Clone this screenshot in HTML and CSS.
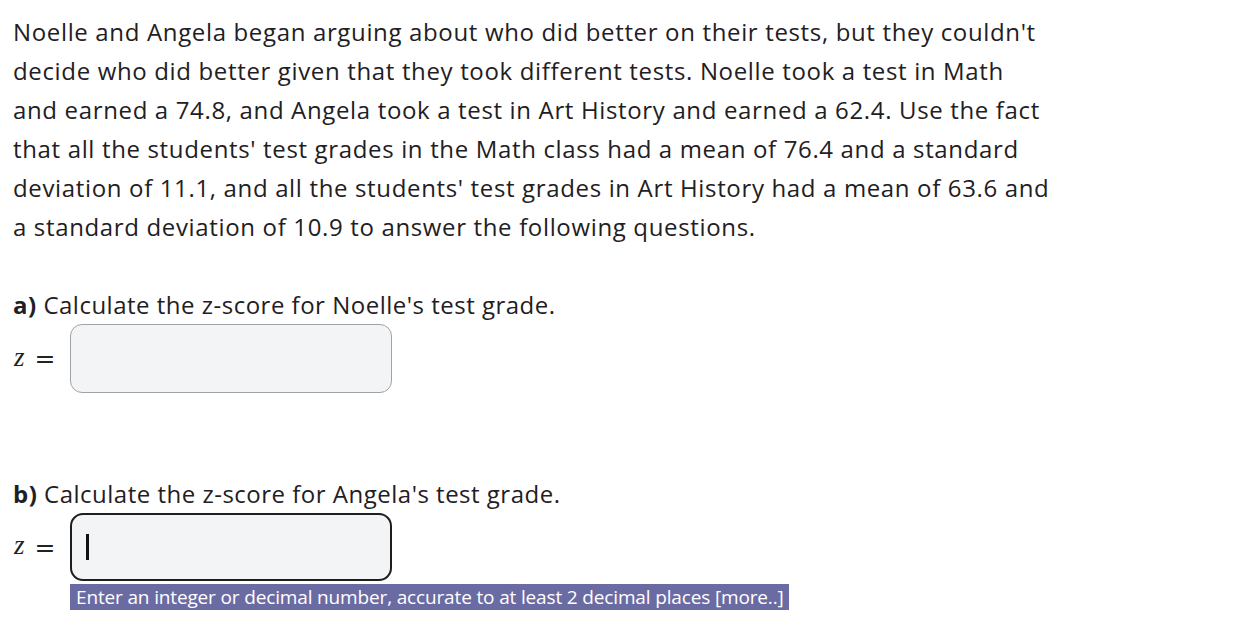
FILE: index.html
```html
<!DOCTYPE html>
<html>
<head>
<meta charset="utf-8">
<link rel="stylesheet" href="styles.css">
</head>
<body>
<div class="page">
  <p class="intro">Noelle and Angela began arguing about who did better on their tests, but they couldn't decide who did better given that they took different tests. Noelle took a test in Math and earned a 74.8, and Angela took a test in Art History and earned a 62.4. Use the fact that all the students' test grades in the Math class had a mean of 76.4 and a standard deviation of 11.1, and all the students' test grades in Art History had a mean of 63.6 and a standard deviation of 10.9 to answer the following questions.</p>

  <div class="part part-a">
    <p class="question"><b>a)</b> Calculate the z-score for Noelle's test grade.</p>
    <div class="answer-row">
      <span class="math"><i class="var">z</i><span class="eq">=</span></span>
      <div class="field"></div>
    </div>
  </div>

  <div class="part part-b">
    <p class="question"><b>b)</b> Calculate the z-score for Angela's test grade.</p>
    <div class="answer-row">
      <span class="math"><i class="var">z</i><span class="eq">=</span></span>
      <div class="field field-focus"><span class="caret"></span></div>
    </div>
    <div class="hint">Enter an integer or decimal number, accurate to at least 2 decimal places [more..]</div>
  </div>
</div>
</body>
</html>
```
FILE: styles.css
```css
html, body {
  margin: 0;
  padding: 0;
  background: #ffffff;
}
.page {
  padding: 12px 0 0 13px;
  width: 1038px;
  font-family: "Open Sans", "Noto Sans", sans-serif;
  font-size: 24px;
  line-height: 39px;
  color: #1f2023;
}
.intro {
  margin: 0;
  letter-spacing: 0.65px;
}
.question {
  margin: 0;
  letter-spacing: 0.5px;
}
.question b {
  font-weight: 700;
}
.part-a {
  margin-top: 39px;
}
.part-b {
  margin-top: 81px;
}
.answer-row {
  display: flex;
  align-items: center;
  gap: 10px;
}
.math {
  display: inline-flex;
  align-items: center;
  width: 47px;
  color: #222;
  line-height: 1;
}
.var {
  font-family: "Liberation Serif", serif;
  font-style: italic;
  font-size: 27px;
  margin-left: 1px;
  margin-top: -3px;
}
.eq {
  font-family: "DejaVu Serif", serif;
  font-size: 25px;
  margin-left: 10px;
}
.field {
  box-sizing: border-box;
  width: 322px;
  height: 69px;
  border: 1px solid #a2a2a2;
  border-radius: 12px;
  background: #f3f4f6;
  display: flex;
  align-items: center;
}
.field-focus {
  height: 68px;
  border: 2px solid #1e1e1e;
  border-radius: 13px;
}
.caret {
  display: block;
  width: 3px;
  height: 26px;
  background: #111;
  margin-left: 14px;
}
.hint {
  width: fit-content;
  margin: 3px 0 0 57px;
  padding: 0 5px 0 6px;
  height: 26px;
  line-height: 26px;
  font-size: 19px;
  background: #6b6ba3;
  color: #ffffff;
  letter-spacing: -0.15px;
}
```
